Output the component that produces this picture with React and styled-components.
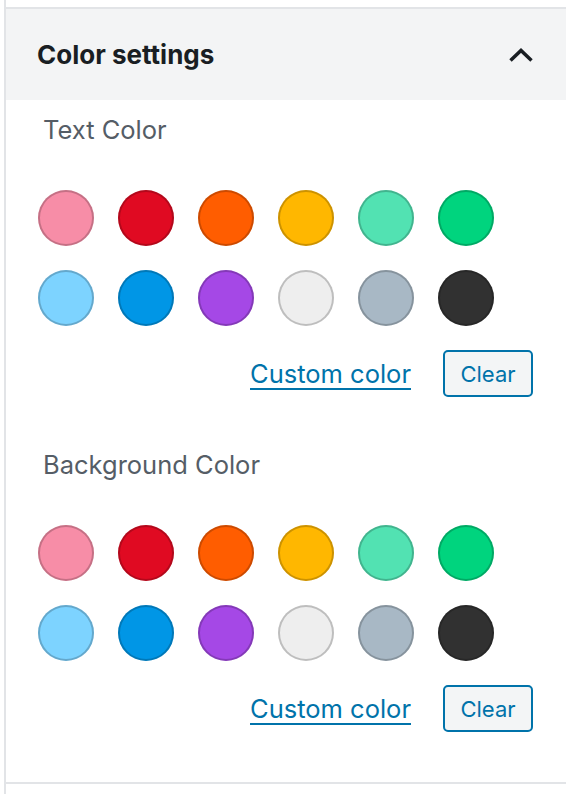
import styled, { createGlobalStyle } from "styled-components"

const GlobalStyle = createGlobalStyle`
  body {
    margin: 0;
    background: #ffffff;
    font-family: Inter, "Noto Sans", sans-serif;
  }
`

//Panel wrapper with the grey left rule
const Sidebar = styled.div`
  margin-left: 4px;
  border-left: 2px solid #e2e4e7;
  padding-top: 7px;
  min-height: 794px;
  box-sizing: border-box;
`

const Panel = styled.section`
  border-top: 2px solid #e2e4e7;
  border-bottom: 2px solid #e2e4e7;
`

const PanelHeader = styled.div`
  height: 91px;
  background: #f3f4f5;
  display: flex;
  align-items: center;
  justify-content: space-between;
  padding: 0 33px 0 31px;
`

const PanelTitle = styled.h2`
  margin: 0;
  font-size: 26px;
  font-weight: 700;
  color: #191e23;
`

const PanelBody = styled.div`
  padding: 15px 33px 50px 32px;
`

const Group = styled.div`
  & + & {
    margin-top: 53px;
  }
`

const Label = styled.div`
  margin-left: 5px;
  line-height: 30px;
  font-size: 25.5px;
  color: #555d66;
`

const Swatches = styled.div`
  margin-top: 45px;
  display: grid;
  grid-template-columns: repeat(6, 56px);
  gap: 24px;
`

const Swatch = styled.button`
  width: 56px;
  height: 56px;
  padding: 0;
  border: none;
  border-radius: 50%;
  background: ${props => props.color};
  box-shadow: inset 0 0 0 2px rgba(0, 0, 0, 0.2);
  cursor: pointer;
`

const Actions = styled.div`
  margin-top: 24px;
  display: flex;
  justify-content: flex-end;
  align-items: center;
  gap: 32px;
`

const CustomLink = styled.a`
  font-size: 25.5px;
  line-height: 30px;
  color: #0073aa;
  text-decoration: underline;
  text-underline-offset: 5px;
  text-decoration-thickness: 2px;
  cursor: pointer;
`

const ClearButton = styled.button`
  width: 90px;
  height: 47px;
  border: 2px solid #0073aa;
  border-radius: 5px;
  background: #f3f5f6;
  color: #0073aa;
  font-family: Inter, "Noto Sans", sans-serif;
  font-size: 22px;
  cursor: pointer;
`

const palette = [
  "#f78da7", "#e00a22", "#ff5d00", "#ffb700", "#52e2b2", "#00d47e",
  "#7dd3ff", "#0096e6", "#a548e6", "#eeeeee", "#a8b8c5", "#313131"
]

function ChevronUp() {
  return (
    <svg width="24" height="16" viewBox="0 0 24 16">
      <polyline points="1.5,13.5 12,3.5 22.5,13.5" fill="none" stroke="#191e23" strokeWidth="3.5" />
    </svg>
  )
}

function ColorGroup({ label }) {
  return (
    <Group>
      <Label>{label}</Label>
      <Swatches>
        {palette.map((color, index) => (
          <Swatch key={index} color={color} aria-label={color} />
        ))}
      </Swatches>
      <Actions>
        <CustomLink>Custom color</CustomLink>
        <ClearButton>Clear</ClearButton>
      </Actions>
    </Group>
  )
}

function App() {
  return (
    <>
      <GlobalStyle />
      <Sidebar>
        <Panel>
          <PanelHeader>
            <PanelTitle>Color settings</PanelTitle>
            <ChevronUp />
          </PanelHeader>
          <PanelBody>
            <ColorGroup label="Text Color" />
            <ColorGroup label="Background Color" />
          </PanelBody>
        </Panel>
      </Sidebar>
    </>
  )
}

export default App
